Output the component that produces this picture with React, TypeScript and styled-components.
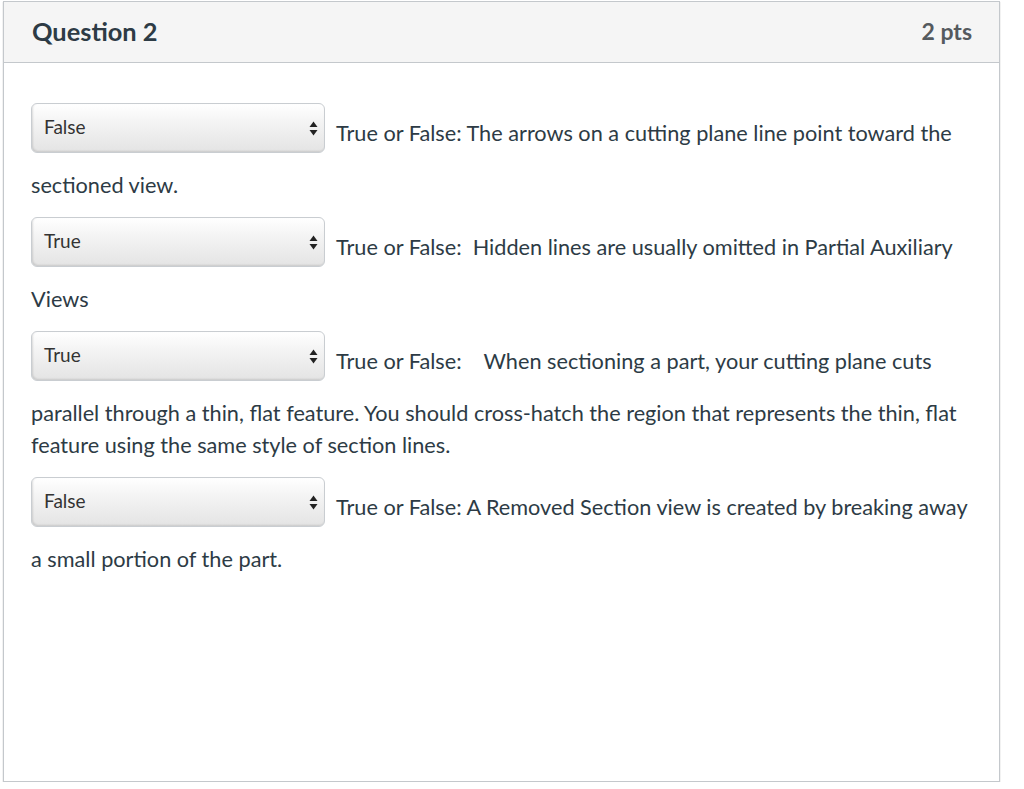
import * as React from 'react'
import styled, { createGlobalStyle } from 'styled-components'

const GlobalStyle = createGlobalStyle`
    html, body {
        margin: 0;
        padding: 0;
        background: #fff;
    }
    body {
        font-family: Lato, 'Open Sans', sans-serif;
        color: #2d3b45;
    }
`

/**
 * Outer card holding one quiz question.
 */
const QuestionCard = styled.div`
    box-sizing: border-box;
    width: 997px;
    margin: 1px 0 0 3px;
    border: 1px solid #c4c8cc;
    box-shadow: 0 1px 1px rgba(0, 0, 0, 0.3);
    background: #fff;
`

/**
 * Grey band on top with the title and the points.
 */
const Header = styled.div`
    display: flex;
    align-items: center;
    justify-content: space-between;
    box-sizing: border-box;
    height: 61px;
    padding: 0 27px 2px 28px;
    background: #f5f5f5;
    border-bottom: 1px solid #c4c8cc;
`

const Title = styled.h2`
    margin: 0;
    font-size: 25.4px;
    font-weight: 700;
    color: #2d3b45;
`

const Points = styled.span`
    font-size: 23px;
    font-weight: 700;
    color: #555a5e;
`

const Body = styled.div`
    box-sizing: border-box;
    min-height: 718px;
    padding: 40px 23px 0 27px;
`

/**
 * One statement with its True/False dropdown in front.
 */
const Statement = styled.p`
    margin: 0 0 16px 0;
    font-size: 21.7px;
    line-height: 32px;
`

/**
 * Fake dropdown, looks like the old gradient select.
 */
const SelectBox = styled.span`
    display: inline-flex;
    align-items: center;
    justify-content: space-between;
    box-sizing: border-box;
    width: 294px;
    height: 50px;
    padding: 0 6px 0 12px;
    margin: 0 11px 16px 0;
    vertical-align: 7px;
    border: 1px solid #c9cdd1;
    border-radius: 6px;
    background: linear-gradient(to bottom, #ffffff 0%, #f3f3f3 40%, #e4e4e4 100%);
    box-shadow: inset 1px -1px 2px rgba(0, 0, 0, 0.12);
    font-size: 19px;
    line-height: 22px;
    color: #333;
`

const SelectLabel = styled.span`
    padding-bottom: 2px;
`

const Arrows = () => (
    <svg width="9" height="15" viewBox="0 0 9 15" aria-hidden="true">
        <path d="M4.5 0.5 L8.5 6 H0.5 Z" fill="#222" />
        <path d="M4.5 14.5 L8.5 9 H0.5 Z" fill="#222" />
    </svg>
)

interface SelectProps {
    value: string
}

const Select: React.FunctionComponent<SelectProps> = ({ value }) => (
    <SelectBox role="combobox">
        <SelectLabel>{value}</SelectLabel>
        <Arrows />
    </SelectBox>
)

const statements = [
    {
        answer: 'False',
        text: 'True or False: The arrows on a cutting plane line point toward the sectioned view.',
    },
    {
        answer: 'True',
        text: 'True or False:\u00a0 Hidden lines are usually omitted in Partial Auxiliary Views',
    },
    {
        answer: 'True',
        text: 'True or False:\u00a0 \u00a0 When sectioning a part, your cutting plane cuts parallel through a thin, flat feature. You should cross-hatch the region that represents the thin, flat feature using the same style of section lines.',
    },
    {
        answer: 'False',
        text: 'True or False: A Removed Section view is created by breaking away a small portion of the part.',
    },
]

const App: React.FunctionComponent = () => (
    <>
        <GlobalStyle />
        <QuestionCard>
            <Header>
                <Title>Question 2</Title>
                <Points>2 pts</Points>
            </Header>
            <Body>
                {statements.map((s, i) => (
                    <Statement key={i}>
                        <Select value={s.answer} />
                        <span>{s.text}</span>
                    </Statement>
                ))}
            </Body>
        </QuestionCard>
    </>
)

export default App
